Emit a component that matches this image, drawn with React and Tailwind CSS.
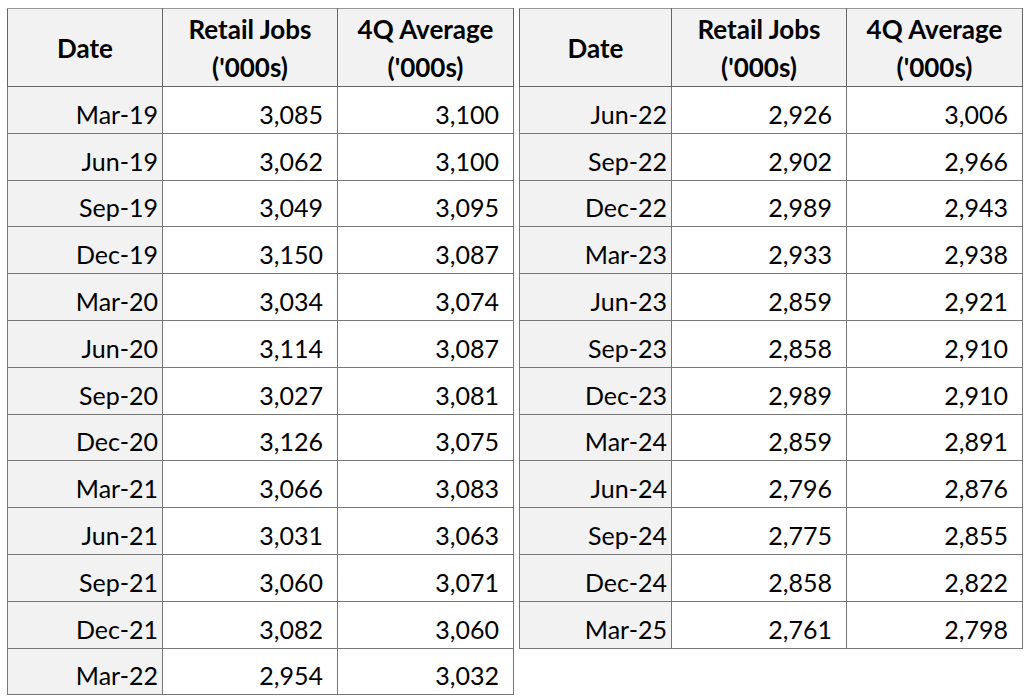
import React from "react";

const left = [
  ["Mar-19", "3,085", "3,100"],
  ["Jun-19", "3,062", "3,100"],
  ["Sep-19", "3,049", "3,095"],
  ["Dec-19", "3,150", "3,087"],
  ["Mar-20", "3,034", "3,074"],
  ["Jun-20", "3,114", "3,087"],
  ["Sep-20", "3,027", "3,081"],
  ["Dec-20", "3,126", "3,075"],
  ["Mar-21", "3,066", "3,083"],
  ["Jun-21", "3,031", "3,063"],
  ["Sep-21", "3,060", "3,071"],
  ["Dec-21", "3,082", "3,060"],
  ["Mar-22", "2,954", "3,032"],
];

const right = [
  ["Jun-22", "2,926", "3,006"],
  ["Sep-22", "2,902", "2,966"],
  ["Dec-22", "2,989", "2,943"],
  ["Mar-23", "2,933", "2,938"],
  ["Jun-23", "2,859", "2,921"],
  ["Sep-23", "2,858", "2,910"],
  ["Dec-23", "2,989", "2,910"],
  ["Mar-24", "2,859", "2,891"],
  ["Jun-24", "2,796", "2,876"],
  ["Sep-24", "2,775", "2,855"],
  ["Dec-24", "2,858", "2,822"],
  ["Mar-25", "2,761", "2,798"],
];

function JobsTable({ rows, dateWidth }) {
  return (
    <table className="border-collapse border border-[#555] table-fixed">
      <colgroup>
        <col style={{ width: dateWidth }} />
        <col className="w-[175px]" />
        <col className="w-[176px]" />
      </colgroup>
      <thead>
        <tr className="h-[78px] bg-[#f2f2f2] font-bold text-[26px] leading-[38px]">
          <th className="border border-[#666] border-t-[#999] text-center">Date</th>
          <th className="border border-[#666] border-t-[#999] text-center pt-[1px]">
            Retail Jobs
            <br />
            ('000s)
          </th>
          <th className="border border-[#666] border-t-[#999] text-center pt-[1px]">
            4Q Average
            <br />
            ('000s)
          </th>
        </tr>
      </thead>
      <tbody>
        {rows.map((r) => (
          <tr key={r[0]} className="h-[46.8px] text-[25px] leading-[30px]">
            <td className="border border-[#777] bg-[#f2f2f2] text-right align-bottom pr-[4px] pb-[4px]">
              {r[0]}
            </td>
            <td className="border border-[#777] bg-white text-right align-bottom pr-[14px] pb-[4px]">
              {r[1]}
            </td>
            <td className="border border-[#777] bg-white text-right align-bottom pr-[14px] pb-[4px]">
              {r[2]}
            </td>
          </tr>
        ))}
      </tbody>
    </table>
  );
}

export default function App() {
  return (
    <div
      className="w-[1024px] h-[697px] bg-white text-black flex items-start gap-[5px] pl-[7px] pt-[8px] overflow-hidden"
      style={{ fontFamily: "Lato, 'Liberation Sans', sans-serif" }}
    >
      <JobsTable rows={left} dateWidth="155px" />
      <JobsTable rows={right} dateWidth="152px" />
    </div>
  );
}
